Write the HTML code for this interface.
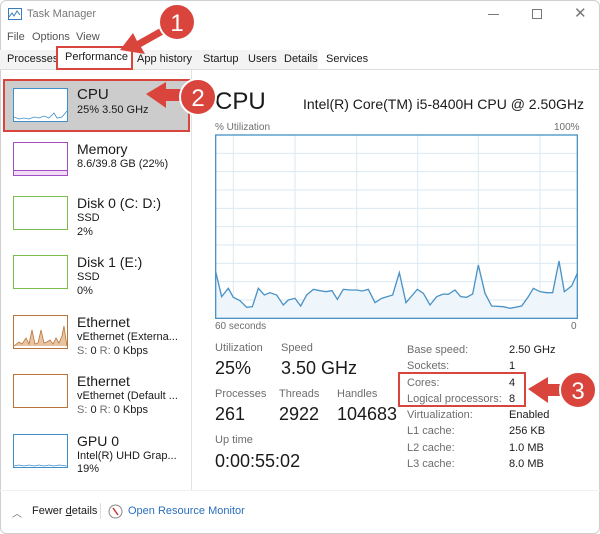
<!DOCTYPE html>
<html><head><style>
*{margin:0;padding:0;box-sizing:border-box}
body{width:600px;height:534px;background:#fff;font-family:"Liberation Sans",sans-serif;color:#1a1a1a;position:relative;overflow:hidden}
.a{position:absolute;white-space:nowrap}
.s{font-size:11px}
.g{color:#6d6d6d}
.thumb{position:absolute;width:55px;height:34px;border:1px solid}
</style></head><body>
<div class="a" style="left:0;top:0;width:600px;height:534px;border:1px solid #cfcfcf;border-radius:6px"></div>
<svg class="a" style="left:8px;top:8px" width="14" height="12"><rect x="0.5" y="0.5" width="13" height="11" fill="#fff" stroke="#3a7bbf"/><polyline points="1,9 4,5 6,8 9,3 12,7" fill="none" stroke="#3a7bbf"/></svg>
<div class="a s g" style="left:27px;top:8px;color:#777">Task Manager</div>
<div class="a" style="left:488px;top:14px;width:11px;height:1px;background:#777"></div>
<div class="a" style="left:532px;top:9px;width:10px;height:10px;border:1px solid #777"></div>
<div class="a" style="left:574px;top:4px;font-size:15px;color:#777">✕</div>
<div class="a s g" style="left:7px;top:31px;color:#555">File</div>
<div class="a s g" style="left:32px;top:31px;color:#555">Options</div>
<div class="a s g" style="left:76px;top:31px;color:#555">View</div>
<div class="a" style="left:0;top:69px;width:600px;height:1px;background:#ddd"></div>
<div class="a" style="left:0;top:50px;width:318px;height:19px;background:#f3f3f3"></div>
<div class="a s" style="left:7px;top:53px">Processes</div>
<div class="a" style="left:56px;top:46px;width:77px;height:24px;background:#fff;border:2px solid #d9453c"></div>
<div class="a s" style="left:65px;top:51px">Performance</div>
<div class="a s" style="left:137px;top:53px">App history</div>
<div class="a s" style="left:203px;top:53px">Startup</div>
<div class="a s" style="left:248px;top:53px">Users</div>
<div class="a s" style="left:284px;top:53px">Details</div>
<div class="a s" style="left:326px;top:53px">Services</div>
<div class="a" style="left:191px;top:70px;width:1px;height:420px;background:#e3e3e3"></div>

<div class="a" style="left:3px;top:79px;width:187px;height:53px;background:#cccccc;border:2px solid #d9453c"></div>
<div class="thumb" style="left:13px;top:88px;border-color:#3d8ec9;background:#fff"></div>
<svg class="a" style="left:14px;top:108px" width="53" height="13"><polyline points="0,9 5,11 10,10 15,11 20,9 25,10 30,8 35,10 40,5 43,10 48,9 53,3" fill="none" stroke="#3d8ec9" stroke-width="0.8"/></svg>
<div class="a" style="left:77px;top:86px;font-size:15px">CPU</div>
<div class="a s" style="left:77px;top:104px">25% 3.50 GHz</div>

<div class="thumb" style="left:13px;top:142px;border-color:#a04ec2"></div>
<div class="a" style="left:14px;top:170px;width:53px;height:5px;background:#f1dcf6;border-top:1px solid #a04ec2"></div>
<div class="a" style="left:77px;top:141px;font-size:14px">Memory</div>
<div class="a s" style="left:77px;top:158px">8.6/39.8 GB (22%)</div>

<div class="thumb" style="left:13px;top:196px;border-color:#7cbb4c"></div>
<div class="a" style="left:77px;top:195px;font-size:14px">Disk 0 (C: D:)</div>
<div class="a s" style="left:77px;top:212px">SSD</div>
<div class="a s" style="left:77px;top:226px">2%</div>

<div class="thumb" style="left:13px;top:255px;border-color:#7cbb4c"></div>
<div class="a" style="left:77px;top:254px;font-size:14px">Disk 1 (E:)</div>
<div class="a s" style="left:77px;top:271px">SSD</div>
<div class="a s" style="left:77px;top:285px">0%</div>

<div class="thumb" style="left:13px;top:315px;border-color:#b8743a"></div>
<svg class="a" style="left:14px;top:316px" width="53" height="32"><polyline points="0,30 5,26 8,28 12,22 15,28 18,14 21,28 24,27 27,14 30,27 33,26 36,24 39,28 42,22 45,27 48,20 50,10 52,24 53,30" fill="#e8c4a2" stroke="#b8743a" stroke-width="0.8"/></svg>
<div class="a" style="left:77px;top:314px;font-size:14px">Ethernet</div>
<div class="a s" style="left:77px;top:331px">vEthernet (Externa...</div>
<div class="a s" style="left:77px;top:345px"><span class="g">S:</span> 0 <span class="g">R:</span> 0 Kbps</div>

<div class="thumb" style="left:13px;top:374px;border-color:#b8743a"></div>
<div class="a" style="left:77px;top:373px;font-size:14px">Ethernet</div>
<div class="a s" style="left:77px;top:390px">vEthernet (Default ...</div>
<div class="a s" style="left:77px;top:404px"><span class="g">S:</span> 0 <span class="g">R:</span> 0 Kbps</div>

<div class="thumb" style="left:13px;top:434px;border-color:#3d8ec9"></div>
<svg class="a" style="left:14px;top:464px" width="53" height="3"><polyline points="0,2 5,1 10,2 15,1 20,2 25,1 30,2 35,1 40,2 45,1 53,2" fill="none" stroke="#3d8ec9" stroke-width="0.8"/></svg>
<div class="a" style="left:77px;top:433px;font-size:14px">GPU 0</div>
<div class="a s" style="left:77px;top:450px">Intel(R) UHD Grap...</div>
<div class="a s" style="left:77px;top:463px">19%</div>

<div class="a" style="left:215px;top:88px;font-size:24px">CPU</div>
<div class="a" style="left:303px;top:96px;font-size:14px">Intel(R) Core(TM) i5-8400H CPU @ 2.50GHz</div>
<div class="a g" style="left:215px;top:122px;font-size:10px">% Utilization</div>
<div class="a g" style="left:554px;top:122px;font-size:10px">100%</div>
<svg class="a" style="left:200px;top:120px" width="400" height="210" viewBox="0 0 1200 630">
<g stroke="#dbe9f3" stroke-width="3">
<line x1="100" y1="45" x2="100" y2="595"/><line x1="285" y1="45" x2="285" y2="595"/><line x1="470" y1="45" x2="470" y2="595"/><line x1="653" y1="45" x2="653" y2="595"/><line x1="835" y1="45" x2="835" y2="595"/><line x1="1020" y1="45" x2="1020" y2="595"/>
<line x1="47" y1="100" x2="1132" y2="100"/><line x1="47" y1="155" x2="1132" y2="155"/><line x1="47" y1="210" x2="1132" y2="210"/><line x1="47" y1="265" x2="1132" y2="265"/><line x1="47" y1="320" x2="1132" y2="320"/><line x1="47" y1="375" x2="1132" y2="375"/><line x1="47" y1="430" x2="1132" y2="430"/><line x1="47" y1="485" x2="1132" y2="485"/><line x1="47" y1="540" x2="1132" y2="540"/>
</g>
<polygon fill="#eef5fb" points="47,595 47,455 65,530 85,505 100,532 120,542 140,562 157,560 175,505 193,525 210,518 230,525 250,555 265,540 285,535 302,558 320,525 340,508 360,512 378,515 396,512 412,538 430,508 450,510 470,510 487,513 505,508 525,548 545,535 578,525 598,458 618,548 652,508 670,520 690,555 710,530 730,522 745,523 765,510 782,530 800,532 818,522 835,435 855,520 875,558 910,560 930,565 965,558 985,530 1000,505 1020,515 1040,518 1058,518 1077,423 1093,515 1115,498 1132,460 1132,595"/>
<polyline fill="none" stroke="#4b93c7" stroke-width="4" points="47,455 65,530 85,505 100,532 120,542 140,562 157,560 175,505 193,525 210,518 230,525 250,555 265,540 285,535 302,558 320,525 340,508 360,512 378,515 396,512 412,538 430,508 450,510 470,510 487,513 505,508 525,548 545,535 578,525 598,458 618,548 652,508 670,520 690,555 710,530 730,522 745,523 765,510 782,530 800,532 818,522 835,435 855,520 875,558 910,560 930,565 965,558 985,530 1000,505 1020,515 1040,518 1058,518 1077,423 1093,515 1115,498 1132,460"/>
<rect x="47" y="45" width="1085" height="550" fill="none" stroke="#4b93c7" stroke-width="4"/>
</svg>
<div class="a g" style="left:215px;top:321px;font-size:10px">60 seconds</div>
<div class="a g" style="left:571px;top:321px;font-size:10px">0</div>

<div class="a s g" style="left:215px;top:342px">Utilization</div>
<div class="a s g" style="left:281px;top:342px">Speed</div>
<div class="a" style="left:215px;top:358px;font-size:18px">25%</div>
<div class="a" style="left:281px;top:358px;font-size:18px">3.50 GHz</div>
<div class="a s g" style="left:215px;top:388px">Processes</div>
<div class="a s g" style="left:279px;top:388px">Threads</div>
<div class="a s g" style="left:337px;top:388px">Handles</div>
<div class="a" style="left:215px;top:404px;font-size:18px">261</div>
<div class="a" style="left:279px;top:404px;font-size:18px">2922</div>
<div class="a" style="left:337px;top:404px;font-size:18px">104683</div>
<div class="a s g" style="left:215px;top:434px">Up time</div>
<div class="a" style="left:215px;top:451px;font-size:18px">0:00:55:02</div>

<div class="a s g" style="left:407px;top:342px;line-height:16.3px">Base speed:<br>Sockets:<br>Cores:<br>Logical processors:<br>Virtualization:<br>L1 cache:<br>L2 cache:<br>L3 cache:</div>
<div class="a s" style="left:509px;top:342px;line-height:16.3px">2.50 GHz<br>1<br>4<br>8<br>Enabled<br>256 KB<br>1.0 MB<br>8.0 MB</div>
<div class="a" style="left:398px;top:372px;width:128px;height:35px;border:2px solid #d9453c"></div>

<div class="a" style="left:0;top:490px;width:600px;height:1px;background:#f0f0f0"></div>
<div class="a g" style="left:12px;top:505px;font-size:10px">︿</div>
<div class="a s" style="left:32px;top:505px">Fewer <u>d</u>etails</div>
<div class="a" style="left:100px;top:503px;width:1px;height:16px;background:#ddd"></div>
<svg class="a" style="left:108px;top:504px" width="15" height="15"><circle cx="7.5" cy="7.5" r="6.5" fill="#fff" stroke="#888"/><line x1="5" y1="4" x2="10" y2="11" stroke="#c33" stroke-width="1.5"/></svg>
<div class="a s" style="left:128px;top:505px;color:#2a6fc0">Open Resource Monitor</div>

<!-- annotations -->
<svg class="a" style="left:0;top:0" width="600" height="534">
<g fill="#d9453c">
<polygon points="120,50 133,33 137,41 162,27 166,33 141,47 145,54"/>
<polygon points="146,94 166,82 166,89 182,89 182,101 166,101 166,108"/>
<polygon points="528,389 548,377 548,384 562,384 562,396 548,396 548,403"/>
<circle cx="177" cy="22" r="18" stroke="#fff" stroke-width="2"/>
<circle cx="198" cy="97" r="18" stroke="#fff" stroke-width="2"/>
<circle cx="578" cy="390" r="18" stroke="#fff" stroke-width="2"/>
</g>
<g fill="#fff" font-family="Liberation Sans" font-size="24" text-anchor="middle">
<text x="177" y="31">1</text><text x="198" y="106">2</text><text x="578" y="399">3</text>
</g>
</svg>
</body></html>
